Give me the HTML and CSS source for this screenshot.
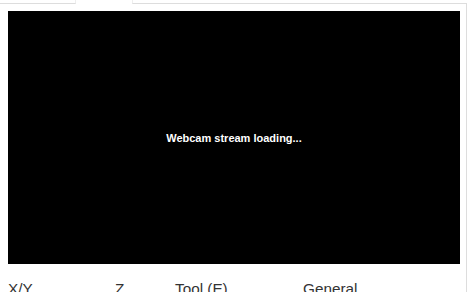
FILE: index.html
```html
<!DOCTYPE html>
<html>
<head>
<meta charset="utf-8">
<link rel="stylesheet" href="styles.css">
</head>
<body>
<div class="page">
  <div class="tabs">
    <div class="tab first"></div>
    <div class="tab active"></div>
    <div class="tab rest"></div>
  </div>
  <div class="content">
    <div class="webcam">
      <span class="loading">Webcam stream loading...</span>
    </div>
    <div class="panels">
      <h1 class="panel xy">X/Y</h1>
      <h1 class="panel z">Z</h1>
      <h1 class="panel tool">Tool (E)</h1>
      <h1 class="panel general">General</h1>
    </div>
  </div>
</div>
</body>
</html>
```

FILE: styles.css
```css
html, body {
  margin: 0;
  padding: 0;
  background: #fff;
  font-family: "Liberation Sans", Arial, sans-serif;
  color: #333;
  overflow: hidden;
}
.page {
  width: 467px;
}
.tabs {
  display: flex;
  height: 4px;
}
.tab {
  box-sizing: border-box;
  height: 4px;
}
.tab.first {
  width: 76px;
  border-bottom: 1px solid #ddd;
  border-right: 1px solid #eee;
}
.tab.active {
  width: 56px;
}
.tab.rest {
  flex: 1;
  border-bottom: 1px solid #ddd;
  border-left: 1px solid #eee;
}
.content {
  border-right: 1px solid #ddd;
  padding: 7px 0 0 8px;
  height: 300px;
  box-sizing: border-box;
}
.webcam {
  width: 452px;
  height: 253px;
  background: #000;
  display: flex;
  align-items: center;
  justify-content: center;
}
.loading {
  color: #fff;
  font-weight: bold;
  font-size: 11px;
}
.panels {
  display: flex;
  margin-top: 15px;
}
.panel {
  margin: 0;
  font-size: 15.3px;
  font-weight: normal;
  line-height: 20px;
  color: #333;
}
.xy { width: 107px; }
.z { width: 60px; }
.tool { width: 128px; }
.general { flex: 1; }
```
